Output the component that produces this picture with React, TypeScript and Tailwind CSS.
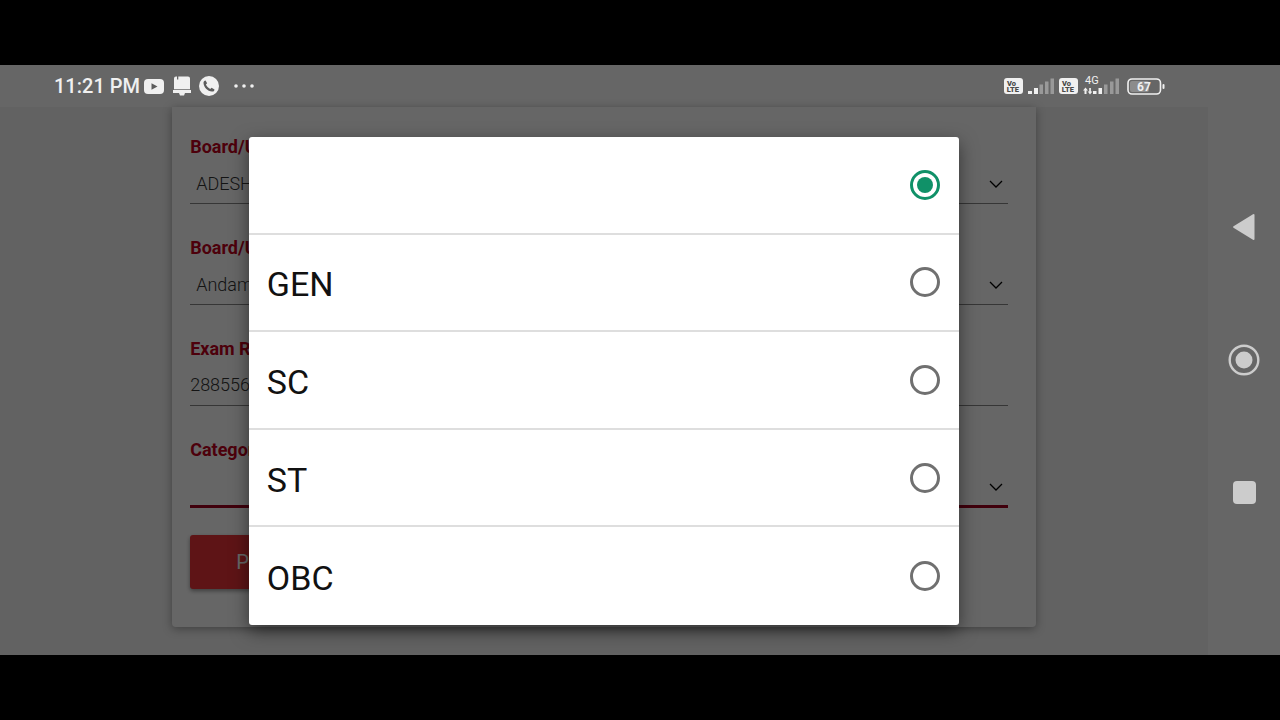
import { useState } from 'react';

const categories = ['', 'GEN', 'SC', 'ST', 'OBC'];

const labelClass = 'block text-[18px] leading-5 font-bold text-[#c0001c]';
const controlClass =
  'block w-full appearance-none rounded-none bg-transparent text-[18px] font-light text-[#333] outline-none';

function Chevron() {
  return (
    <svg
      className="pointer-events-none absolute right-1 top-[11px] h-4 w-4"
      viewBox="0 0 16 16"
      fill="none"
      stroke="#000"
      strokeWidth="1.3"
    >
      <path d="M2 5l6 6 6-6" />
    </svg>
  );
}

function SelectField({ id, label, value }: { id: string; label: string; value: string }) {
  return (
    <div className="mb-[34px]">
      <label htmlFor={id} className={labelClass}>{label}</label>
      <div className="relative mt-2">
        <select id={id} className={`${controlClass} h-[39px] border-b border-[#888] px-[6px] pb-[2px]`}>
          <option>{value}</option>
        </select>
        <Chevron />
      </div>
    </div>
  );
}

function VolteBadge() {
  return (
    <svg className="h-4 w-[19px]" viewBox="0 0 19 16">
      <rect width="19" height="16" rx="3" fill="#f0f0f0" />
      <g fill="#4a4a4a" fontFamily="Roboto, sans-serif" fontWeight="900">
        <text x="3" y="7.5" fontSize="7.5">Vo</text>
        <text x="2.7" y="14.3" fontSize="7.5">LTE</text>
      </g>
    </svg>
  );
}

function StatusBar() {
  return (
    <header className="flex h-[42px] items-center bg-[#666] pl-[54px] pr-[115px] text-[#f0f0f0]">
      <span className="text-[20px] leading-6 font-medium">11:21 PM</span>
      <svg className="ml-1 h-[15px] w-5" viewBox="0 0 20 15">
        <rect width="20" height="15" rx="4" fill="#f0f0f0" />
        <path d="M7.5 4.3v6.4l6-3.2z" fill="#5c5c5c" />
      </svg>
      <svg className="ml-2 h-5 w-5" viewBox="0 0 20 20" fill="#f0f0f0">
        <path d="M4 .5h1v3h1.300V.5H16a2 2 0 0 1 2 2v10.700H2V2.500a2 2 0 0 1 2-2z" />
        <path d="M1 14h18v3h-6l-1 2.500H8L7 17H1z" />
      </svg>
      <svg className="ml-[7px] h-5 w-5" viewBox="0 0 20 20">
        <circle cx="10" cy="10" r="10" fill="#f0f0f0" />
        <path
          d="M6.6 4.4l1.5 2.9-1.2 1.3c.8 1.8 2.3 3.4 4.3 4.4l1.4-1.2 2.9 1.6c-.2 1.500-1.100 2.300-2.500 2.200C8.500 15.100 4.700 11.200 4.500 6.900c0-1.300.8-2.300 2.100-2.500z"
          fill="#5c5c5c"
        />
      </svg>
      <svg className="ml-[15px] h-1 w-5" viewBox="0 0 20 4" fill="#f0f0f0">
        <circle cx="2" cy="2" r="1.800" />
        <circle cx="10" cy="2" r="1.800" />
        <circle cx="18" cy="2" r="1.800" />
      </svg>

      <div className="ml-auto flex items-center">
        <VolteBadge />
        <svg className="ml-[5px] h-5 w-[26px]" viewBox="0 0 26 20" fill="#999">
          <path d="M0 15h4v3H0zM6 12h4v6H6z" fill="#f0f0f0" />
          <path d="M11.500 8.500h3.500V18h-3.500zM17 5.500h3.500V18H17zM22.500 2.500H26V18h-3.500z" />
        </svg>
        <span className="ml-[5px] flex"><VolteBadge /></span>
        <svg className="ml-[5px] h-6 w-9" viewBox="0 0 36 24" fill="#999">
          <text x="2" y="10" fontSize="11" fontFamily="Roboto, sans-serif" fill="#f0f0f0">4G</text>
          <path d="M2.500 13.500L5 16.500H3.500V20h-2v-3.500H0zM7 20.500L4.800 17.500h1.400V14h1.700v3.500h1.500z" fill="#f0f0f0" />
          <path d="M10 17h3.500v3H10zM15.500 14H19v6h-3.500z" fill="#f0f0f0" />
          <path d="M21 10.500h3.500V20H21zM27 7.500h3.500V20H27zM32.500 4.500H36V20h-3.500z" />
        </svg>
        <svg className="ml-2 h-[17px] w-[38px]" viewBox="0 0 38 17">
          <rect x="3" y="3" width="19" height="11" rx="2" fill="#8c8c8c" />
          <rect x="1" y="1" width="32.500" height="15" rx="4" fill="none" stroke="#f0f0f0" strokeWidth="1.600" />
          <rect x="35.500" y="6" width="2" height="5" rx="1" fill="#f0f0f0" />
          <text x="17" y="13" textAnchor="middle" fontSize="12" fontWeight="700" fontFamily="Roboto, sans-serif" fill="#f0f0f0">67</text>
        </svg>
      </div>
    </header>
  );
}

function NavBar() {
  return (
    <nav className="flex w-[72px] shrink-0 flex-col items-center justify-center gap-[101px] bg-[#666] pb-[43px]">
      <button aria-label="Back" className="flex h-8 w-8 items-center justify-center">
        <svg className="h-7 w-6" viewBox="0 0 24 28" fill="#ccc">
          <path d="M1.500 13.300L21 1.200q1.500-.8 1.500.8v24q0 1.600-1.500.8L1.500 14.700q-1-.7 0-1.400z" />
        </svg>
      </button>
      <button aria-label="Home" className="flex h-8 w-8 items-center justify-center">
        <svg className="h-8 w-8" viewBox="0 0 32 32">
          <circle cx="16" cy="16" r="14.300" fill="none" stroke="#ccc" strokeWidth="2.400" />
          <circle cx="16" cy="16" r="8.500" fill="#ccc" />
        </svg>
      </button>
      <button aria-label="Recent apps" className="flex h-8 w-8 items-center justify-center">
        <span className="h-[23px] w-[23px] rounded-[4px] bg-[#ccc]" />
      </button>
    </nav>
  );
}

function CategoryDialog() {
  const [selected, setSelected] = useState('');

  return (
    <div
      role="dialog"
      aria-label="Category"
      className="grid h-[488px] w-[58.8%] auto-rows-fr divide-y-2 divide-[#dedede] rounded-[3px] bg-white shadow-[0_6px_18px_rgba(0,0,0,0.5)]"
    >
      {categories.map((name) => (
        <label key={name} className="flex items-center justify-between pl-[18px] pr-[19px]">
          <span className="pt-1 text-[34px] leading-10 text-[#111]">{name}</span>
          <input
            type="radio"
            name="category"
            aria-label={name || 'No category'}
            checked={selected === name}
            onChange={() => setSelected(name)}
            className="flex h-[30px] w-[30px] appearance-none items-center justify-center rounded-full border-[3px] border-[#707070] before:h-4 before:w-4 before:rounded-full checked:border-[#109168] checked:before:bg-[#109168]"
          />
        </label>
      ))}
    </div>
  );
}

export default function App() {
  return (
    <div className="flex min-h-screen flex-col bg-black py-[65px] font-[Roboto,sans-serif]">
      <StatusBar />
      <div className="flex flex-1">
        <main className="relative flex-1 bg-[#f4f4f4] pb-7">
          <form className="mx-auto w-[71.5%] rounded-b-[4px] bg-white pb-[38px] pl-[18px] pr-7 pt-[30px] shadow-[0_2px_10px_rgba(0,0,0,0.35)]">
            <SelectField id="board" label="Board/University" value="ADESH" />
            <SelectField id="state" label="Board/University" value="Andaman" />

            <div className="mb-[34px]">
              <label htmlFor="roll" className={labelClass}>Exam Roll</label>
              <input id="roll" defaultValue="288556" className={`${controlClass} mt-2 h-[39px] border-b border-[#888] pb-1`} />
            </div>

            <label htmlFor="category" className={labelClass}>Category</label>
            <div className="relative mt-2">
              <select id="category" className={`${controlClass} h-10 border-b-[3px] border-[#a00020] px-[6px]`}>
                <option></option>
              </select>
              <Chevron />
            </div>

            <button
              type="button"
              className="mt-[27px] h-[54px] w-[140px] rounded-[3px] bg-[#eb3239] pl-[46px] text-left text-[20px] text-white shadow-[0_2px_4px_rgba(0,0,0,0.4)]"
            >
              P
            </button>
          </form>

          {/* Dimmed backdrop with the picker */}
          <div className="absolute inset-0 flex items-center justify-center bg-black/60">
            <CategoryDialog />
          </div>
        </main>
        <NavBar />
      </div>
    </div>
  );
}
